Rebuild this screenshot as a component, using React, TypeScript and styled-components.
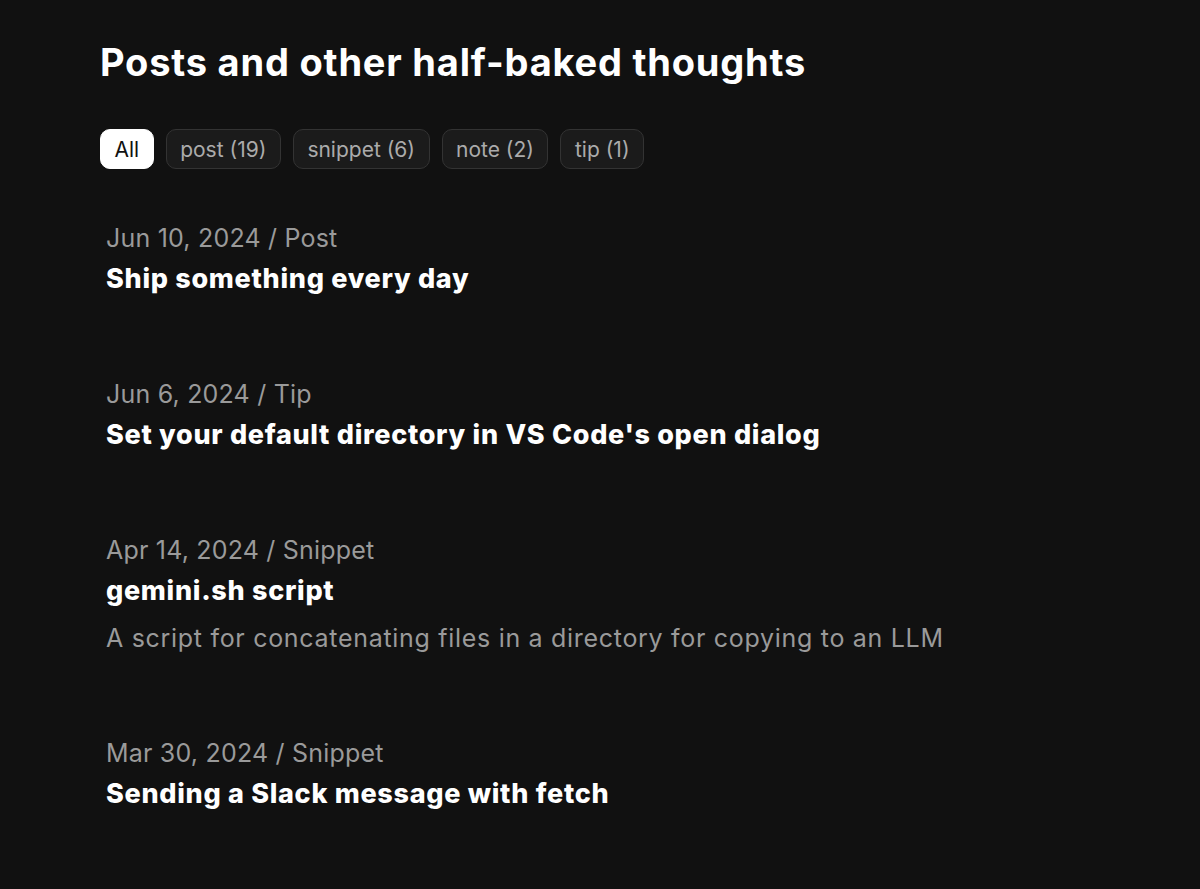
import styled, { createGlobalStyle } from 'styled-components';

const GlobalStyle = createGlobalStyle`
  html, body {
    margin: 0;
    background: #111111;
  }
  body {
    font-family: Inter, "Noto Sans", sans-serif;
    color: #ffffff;
  }
`;

const Page = styled.main`
  padding: 40px 100px 0;
`;

const Heading = styled.h1`
  margin: 0;
  font-size: 38px;
  line-height: 44px;
  font-weight: 700;
  letter-spacing: 0.8px;
`;

const Filters = styled.div`
  display: flex;
  gap: 12px;
  margin-top: 45px;
`;

const Pill = styled.button<{ active?: boolean }>`
  height: 40px;
  padding: 0 13.5px;
  border-radius: 10px;
  border: 1px solid ${({ active }) => (active ? '#ffffff' : '#333333')};
  background: ${({ active }) => (active ? '#ffffff' : '#1b1b1b')};
  color: ${({ active }) => (active ? '#111111' : '#ababab')};
  font-family: inherit;
  font-size: 21px;
  cursor: pointer;
`;

const List = styled.ul`
  list-style: none;
  margin: 51px 0 0;
  padding: 0 0 0 6px;
  display: flex;
  flex-direction: column;
  gap: 79px;
`;

const Item = styled.li`
  display: flex;
  flex-direction: column;
`;

const Meta = styled.div`
  font-size: 25px;
  line-height: 36px;
  letter-spacing: 0.2px;
  color: #9a9a9a;
`;

const Title = styled.a`
  margin-top: 5px;
  font-size: 27px;
  line-height: 36px;
  font-weight: 800;
  color: #ffffff;
  text-decoration: none;
  letter-spacing: 0.7px;
`;

const Summary = styled.p`
  margin: 11px 0 0;
  font-size: 25px;
  line-height: 36px;
  letter-spacing: 0.7px;
  color: #9a9a9a;
`;

const filters = [
  { label: 'All', active: true },
  { label: 'post (19)' },
  { label: 'snippet (6)' },
  { label: 'note (2)' },
  { label: 'tip (1)' },
];

const posts = [
  { date: 'Jun 10, 2024', kind: 'Post', title: 'Ship something every day' },
  { date: 'Jun 6, 2024', kind: 'Tip', title: "Set your default directory in VS Code's open dialog" },
  {
    date: 'Apr 14, 2024',
    kind: 'Snippet',
    title: 'gemini.sh script',
    summary: 'A script for concatenating files in a directory for copying to an LLM',
  },
  { date: 'Mar 30, 2024', kind: 'Snippet', title: 'Sending a Slack message with fetch' },
];

export default function App() {
  return (
    <>
      <GlobalStyle />
      <Page>
        <Heading>Posts and other half-baked thoughts</Heading>
        <Filters>
          {filters.map((f) => (
            <Pill key={f.label} active={f.active}>
              {f.label}
            </Pill>
          ))}
        </Filters>
        <List>
          {posts.map((p) => (
            <Item key={p.title}>
              <Meta>
                {p.date} / {p.kind}
              </Meta>
              <Title href="#">{p.title}</Title>
              {p.summary && <Summary>{p.summary}</Summary>}
            </Item>
          ))}
        </List>
      </Page>
    </>
  );
}
